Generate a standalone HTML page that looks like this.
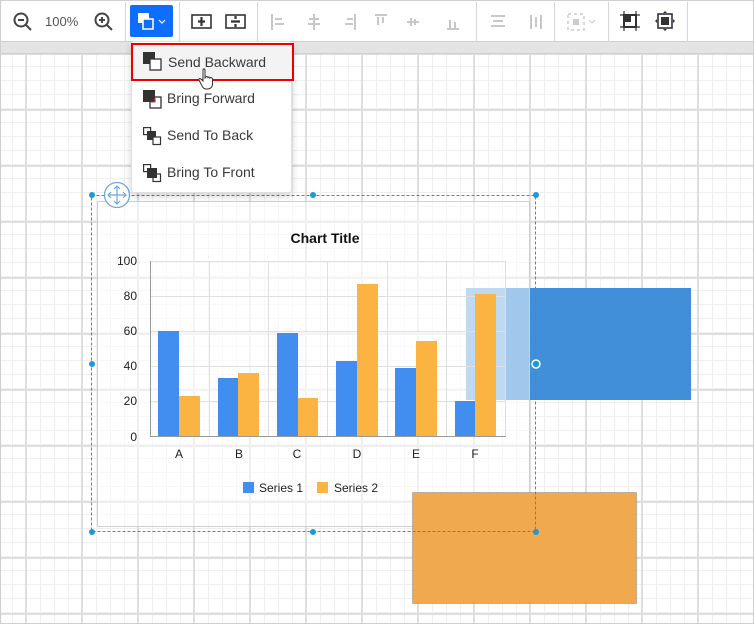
<!DOCTYPE html>
<html><head><meta charset="utf-8"><style>
*{box-sizing:border-box;margin:0;padding:0}
body{width:754px;height:624px;overflow:hidden;background:#fff;font-family:"Liberation Sans",Arial,sans-serif;position:relative}
.abs{position:absolute}
#tb{left:0;top:0;width:754px;height:42px;border:1px solid #cfcfcf;border-bottom:1px solid #cfcfcf;background:#fff}
.sep{position:absolute;top:1px;width:1px;height:40px;background:#d6d6d6}
#ruler{left:0;top:41px;width:754px;height:13px;background:#e4e4e4;border-left:1px solid #cfcfcf;border-right:1px solid #cfcfcf;border-bottom:1px solid #cfcfcf}
#canvas{left:0;top:54px;width:754px;height:570px;border:1px solid #cfcfcf;border-top:none;
background-color:#fff;
background-image:
linear-gradient(90deg,#dedede 0 2px,transparent 2px),
linear-gradient(180deg,#dedede 0 2px,transparent 2px),
linear-gradient(90deg,#efefef 0 1px,transparent 1px),
linear-gradient(180deg,#efefef 0 1px,transparent 1px);
background-size:56px 56px,56px 56px,14px 14px,14px 14px;
background-position:24px 0,0 -1px,11px 0,0 12px}
#menu{left:131px;top:41px;width:161px;height:152px;background:#fff;border:1px solid #e0e0e0;border-radius:3px;box-shadow:0 3px 8px rgba(0,0,0,.18)}
.mi{position:absolute;left:0;width:161px;height:37px;font-size:14px;color:#3a3a3a;line-height:37px;padding-left:35px}
.mi svg{position:absolute;left:11px;top:10px}
</style></head><body>
<div id="canvas" class="abs"></div>
<div id="ruler" class="abs"></div>
<div id="tb" class="abs">
 <svg class="abs" style="left:12px;top:11px" width="20" height="20" viewBox="0 0 20 20"><circle cx="8" cy="8" r="6.5" fill="none" stroke="#444" stroke-width="2"/><path d="M5 8h6M13 13l5 5" stroke="#444" stroke-width="2"/></svg>
 <div class="abs" style="left:44px;top:13px;font-size:13px;color:#555">100%</div>
 <svg class="abs" style="left:93px;top:11px" width="20" height="20" viewBox="0 0 20 20"><circle cx="8" cy="8" r="6.5" fill="none" stroke="#444" stroke-width="2"/><path d="M5 8h6M8 5v6M13 13l5 5" stroke="#444" stroke-width="2"/></svg>
 <div class="sep" style="left:124px"></div>
 <div class="abs" style="left:129px;top:4px;width:43px;height:32px;background:#0d6efd;border-radius:2px"></div>
 <svg class="abs" style="left:136px;top:11px" width="34" height="20" viewBox="0 0 34 20"><rect x="1" y="1" width="11" height="10" fill="#fff"/><rect x="6" y="7" width="10" height="10" fill="#0d6efd" stroke="#fff" stroke-width="1.5"/><path d="M22 8l3 3 3-3" fill="none" stroke="#fff" stroke-width="1.2"/></svg>
 <div class="sep" style="left:178px"></div>
 <svg class="abs" style="left:190px;top:12px" width="22" height="18" viewBox="0 0 22 18"><rect x="1" y="2" width="19" height="13" fill="none" stroke="#333" stroke-width="1.6"/><path d="M10.5 4v9M7 8.5h7" stroke="#333" stroke-width="2.2"/></svg>
 <svg class="abs" style="left:224px;top:12px" width="22" height="18" viewBox="0 0 22 18"><rect x="1" y="2" width="19" height="13" fill="none" stroke="#333" stroke-width="1.6"/><path d="M10.5 3v3M10.5 11v3M6 8.5h9" stroke="#333" stroke-width="2.2"/></svg>
 <div class="sep" style="left:256px"></div>
 <svg class="abs" style="left:268px;top:12px" width="100" height="18" viewBox="0 0 100 18" stroke="#c8c8c8" stroke-width="2" fill="none"><path d="M3 1v16M6 6h7M6 11h9"/><path d="M45 1v16M40 6h10M39 11h12"/><path d="M86 1v16M78 6h6M76 11h8"/></svg>
 <svg class="abs" style="left:372px;top:12px" width="100" height="18" viewBox="0 0 100 18" stroke="#c8c8c8" stroke-width="2" fill="none"><path d="M2 2h12M5 4v8M10 4v6"/><path d="M34 9h12M38 5v8M42 6v6"/><path d="M74 16h12M77 7v8M82 9v6"/></svg>
 <div class="sep" style="left:475px"></div>
 <svg class="abs" style="left:488px;top:12px" width="56" height="18" viewBox="0 0 56 18" stroke="#c8c8c8" stroke-width="2" fill="none"><path d="M2 3h14M4 8h10M2 13h14"/><path d="M42 2v14M47 4v10M52 2v14"/></svg>
 <div class="sep" style="left:553px"></div>
 <svg class="abs" style="left:566px;top:12px" width="36" height="18" viewBox="0 0 36 18" fill="none"><rect x="1" y="1" width="16" height="16" stroke="#ccc" stroke-width="1.5" stroke-dasharray="3 3"/><rect x="6" y="6" width="6" height="6" fill="#ccc"/><path d="M22 7l3 3 3-3" stroke="#ccc"/></svg>
 <div class="sep" style="left:607px"></div>
 <svg class="abs" style="left:619px;top:10px" width="20" height="20" viewBox="0 0 20 20" fill="none"><rect x="4" y="4" width="12" height="12" stroke="#333" stroke-width="2"/><rect x="5" y="5" width="6" height="6" fill="#333"/><path d="M4 0v20M16 0v20M0 4h20M0 16h20" stroke="#333" stroke-width="1.2"/></svg>
 <svg class="abs" style="left:654px;top:10px" width="20" height="20" viewBox="0 0 20 20" fill="none"><rect x="3" y="3" width="14" height="14" stroke="#334" stroke-width="1.6"/><rect x="6" y="6" width="8" height="8" fill="#333"/><path d="M10 0l-2 2h4zM10 20l-2-2h4zM0 10l2-2v4zM20 10l-2-2v4z" fill="#333"/></svg>
 <div class="sep" style="left:686px"></div>
</div>

<div class="abs" style="left:466px;top:288px;width:225px;height:112px;background:#418fd9"></div>
<div class="abs" style="left:97px;top:201px;width:433px;height:326px;background:rgba(255,255,255,.5);border:1px solid #d0d0d0"></div>
<svg class="abs" style="left:0;top:0" width="754" height="624" viewBox="0 0 754 624" font-family="Liberation Sans,Arial,sans-serif">
 <rect x="150" y="261" width="356" height="175" fill="rgba(255,255,255,.33)"/>
 <g stroke="#e0e0e0" stroke-width="1">
  <path d="M150 261.5H506M150 296.5H506M150 331.5H506M150 366.5H506M150 401.5H506"/>
  <path d="M209.5 261V436M268.5 261V436M327.5 261V436M387.5 261V436M446.5 261V436M505.5 261V436"/>
 </g>
 <path d="M150.5 261V436.5H506" stroke="#999" fill="none"/>
 <text x="325" y="243" text-anchor="middle" font-size="14" font-weight="bold" fill="#111">Chart Title</text>
 <g font-size="12" fill="#222" text-anchor="end">
  <text x="137" y="265">100</text><text x="137" y="300">80</text><text x="137" y="335">60</text><text x="137" y="370">40</text><text x="137" y="405">20</text><text x="137" y="441">0</text>
 </g>
 <g fill="#418ef0">
  <rect x="158" y="331" width="21" height="105"/><rect x="218" y="378" width="20" height="58"/><rect x="277" y="333" width="21" height="103"/>
  <rect x="336" y="361" width="21" height="75"/><rect x="395" y="368" width="21" height="68"/><rect x="455" y="401" width="20" height="35"/>
 </g>
 <g fill="#fbb341">
  <rect x="179" y="396" width="21" height="40"/><rect x="238" y="373" width="21" height="63"/><rect x="298" y="398" width="20" height="38"/>
  <rect x="357" y="284" width="21" height="152"/><rect x="416" y="341" width="21" height="95"/><rect x="475" y="294" width="21" height="142"/>
 </g>
 <g font-size="12" fill="#222" text-anchor="middle">
  <text x="179" y="458">A</text><text x="239" y="458">B</text><text x="297" y="458">C</text><text x="357" y="458">D</text><text x="416" y="458">E</text><text x="475" y="458">F</text>
 </g>
 <rect x="243" y="482" width="11" height="11" fill="#418ef0"/><text x="259" y="492" font-size="12" fill="#222">Series 1</text>
 <rect x="317" y="482" width="11" height="11" fill="#fbb341"/><text x="334" y="492" font-size="12" fill="#222">Series 2</text>
 <rect x="412.5" y="492.5" width="224" height="111" fill="#f0a94f" stroke="#888" stroke-dasharray="1 1"/>
 <rect x="91.5" y="195.5" width="444" height="336" fill="none" stroke="#1a9ad6" stroke-dasharray="3 2"/>
 <g fill="#1a9ad6"><circle cx="92" cy="195" r="3"/><circle cx="313" cy="195" r="3"/><circle cx="536" cy="195" r="3"/><circle cx="92" cy="364" r="3"/><circle cx="92" cy="532" r="3"/><circle cx="313" cy="532" r="3"/><circle cx="536" cy="532" r="3"/></g>
 <circle cx="536" cy="364" r="4" fill="#1a9ad6" stroke="#fff" stroke-width="1.5"/>
 <circle cx="117" cy="195" r="12.5" fill="#fff" stroke="#6fa8dc" stroke-width="1.3"/>
 <path d="M117 186v18M108 195h18M114 189l3-3 3 3M114 201l3 3 3-3M111 192l-3 3 3 3M123 192l3 3-3 3" fill="none" stroke="#6fa8dc" stroke-width="1.2"/>
</svg>

<div id="menu" class="abs">
 <div class="mi" style="top:1px;background:#f3f3f3;border:2px solid #e00;left:-1px;width:163px;height:38px;line-height:34px"><svg width="20" height="20" viewBox="0 0 20 20" style="top:7px;left:10px"><rect x="0" y="0" width="12" height="12" fill="#333"/><rect x="7" y="7" width="11" height="11" fill="#fff" stroke="#333" stroke-width="1.3"/></svg>Send Backward</div>
 <div class="mi" style="top:38px"><svg width="20" height="20" viewBox="0 0 20 20"><rect x="7" y="7" width="11" height="11" fill="#fff" stroke="#333" stroke-width="1.3"/><rect x="0" y="0" width="12" height="12" fill="#333"/><path d="M12 8v4H8" stroke="#c33" fill="none"/></svg>Bring Forward</div>
 <div class="mi" style="top:75px"><svg width="20" height="20" viewBox="0 0 20 20"><rect x="0.6" y="0.6" width="7" height="7" fill="#fff" stroke="#333" stroke-width="1.2"/><rect x="4" y="4" width="9" height="9" fill="#333"/><rect x="10" y="10" width="7.5" height="7.5" fill="#fff" stroke="#333" stroke-width="1.2"/></svg>Send To Back</div>
 <div class="mi" style="top:112px"><svg width="20" height="20" viewBox="0 0 20 20"><rect x="0.6" y="0.6" width="7" height="7" fill="#fff" stroke="#333" stroke-width="1.2"/><rect x="10" y="10" width="7.5" height="7.5" fill="#fff" stroke="#333" stroke-width="1.2"/><rect x="4" y="4" width="10" height="10" fill="#333"/></svg>Bring To Front</div>
</div>
<svg class="abs" style="left:198px;top:68px" width="18" height="22" viewBox="0 0 18 22"><path d="M5 2c0-1.5 2-1.5 2 0v8l1-1c1-1 2 0 2 0.5 1-1 2 0 2 0.5 1-1 2.5 0 2.5 1v5c0 3-2 5-5 5H8c-2 0-3-1-4-3L1 12c-.5-1 .5-2 1.5-1.2L5 13z" fill="#fff" stroke="#333" stroke-width="1"/></svg>
</body></html>
